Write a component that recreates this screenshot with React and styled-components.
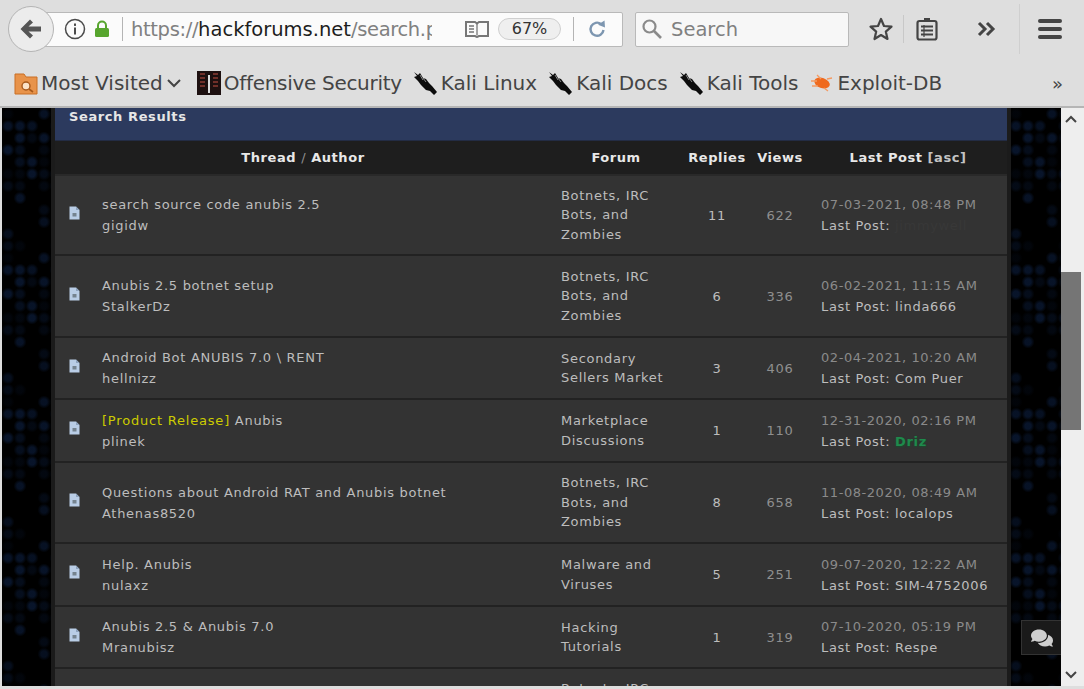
import React from 'react';
import styled, { createGlobalStyle } from 'styled-components';
import { FaComments } from 'react-icons/fa';

const GlobalStyle = createGlobalStyle`
  html, body {
    margin: 0;
    padding: 0;
    height: 689px;
    overflow: hidden;
    background: #dedede;
    font-family: "DejaVu Sans", sans-serif;
  }
`;

// dotted page wallpaper, a few dark blue squares scattered on a 144px tile
const buildDots = () => {
  const layers = [];
  let seed = 41;
  for (let row = 0; row < 12; row++) {
    for (let col = 0; col < 12; col++) {
      seed = (seed * 1103 + 12345) % 65536;
      const roll = seed >> 8;
      if (roll % 10 < 4) continue;
      const alpha = (0.15 + (roll % 16) * 0.035).toFixed(2);
      const x = col * 12 + 6;
      const y = row * 12 + 6;
      layers.push(`radial-gradient(circle at ${x}px ${y}px, rgba(12,30,62,${alpha}) 0, rgba(12,30,62,${alpha}) 3px, transparent 6.5px)`);
    }
  }
  return layers.join(',');
};

const threads = [
  { title: 'search source code anubis 2.5', author: 'gigidw', forum: ['Botnets, IRC', 'Bots, and', 'Zombies'], replies: 11, views: 622, date: '07-03-2021, 08:48 PM', last: 'jimmywell', lastKind: 'hidden', height: 78 },
  { title: 'Anubis 2.5 botnet setup', author: 'StalkerDz', forum: ['Botnets, IRC', 'Bots, and', 'Zombies'], replies: 6, views: 336, date: '06-02-2021, 11:15 AM', last: 'linda666', height: 80 },
  { title: 'Android Bot ANUBIS 7.0 \\ RENT', author: 'hellnizz', forum: ['Secondary', 'Sellers Market'], replies: 3, views: 406, date: '02-04-2021, 10:20 AM', last: 'Com Puer', height: 60 },
  { prefix: '[Product Release]', title: ' Anubis', author: 'plinek', forum: ['Marketplace', 'Discussions'], replies: 1, views: 110, date: '12-31-2020, 02:16 PM', last: 'Driz', lastKind: 'green', height: 61 },
  { title: 'Questions about Android RAT and Anubis botnet', author: 'Athenas8520', forum: ['Botnets, IRC', 'Bots, and', 'Zombies'], replies: 8, views: 658, date: '11-08-2020, 08:49 AM', last: 'localops', height: 79 },
  { title: 'Help. Anubis', author: 'nulaxz', forum: ['Malware and', 'Viruses'], replies: 5, views: 251, date: '09-07-2020, 12:22 AM', last: 'SIM-4752006', height: 61 },
  { title: 'Anubis 2.5 & Anubis 7.0', author: 'Mranubisz', forum: ['Hacking', 'Tutorials'], replies: 1, views: 319, date: '07-10-2020, 05:19 PM', last: 'Respe', height: 60 },
  { title: 'Anubis', author: 'anubis', forum: ['Botnets, IRC', 'Bots, and', 'Zombies'], replies: 2, views: 300, date: '06-12-2020, 01:10 PM', last: 'anubis', height: 78 },
];

const Kali = () => (
  <svg width="26" height="26" viewBox="0 0 26 26">
    <path d="M2 2 L6 5 L8 3 L11 8 L14 9 L17 13 L20 16 L25 22 L22 25 L18 21 L14 20 L9 15 L6 11 L2 7 L5 6 Z" fill="#0c0c0c" />
    <path d="M8 5 L11 10 M11 8 L14 12" stroke="#8a8a8a" strokeWidth="1" />
  </svg>
);

const FileIcon = () => (
  <DocIcon viewBox="0 0 11 14">
    <path d="M0.5 0.5 H7 L10.5 4 V13.5 H0.5 Z" fill="#b9cde6" />
    <path d="M7 0.5 V4 H10.5" fill="#8ea3bd" />
    <rect x="3.5" y="7" width="4" height="3.5" fill="#75838f" />
  </DocIcon>
);

const App = () => {
  return (
    <Window>
      <GlobalStyle />
      <NavBar>
        <BackButton>
          <svg width="24" height="22" viewBox="0 0 24 22">
            <path d="M11 1.5 L1.5 11 L11 20.5 L14 17.5 L9.5 13.5 H22 V8.5 H9.5 L14 4.5 Z" fill="#555" />
          </svg>
        </BackButton>
        <UrlBar>
          <svg width="22" height="22" viewBox="0 0 22 22">
            <circle cx="11" cy="11" r="9.5" fill="none" stroke="#4a4a4a" strokeWidth="1.5" />
            <rect x="10" y="9.5" width="2" height="7" fill="#4a4a4a" />
            <rect x="10" y="5.5" width="2" height="2.4" fill="#4a4a4a" />
          </svg>
          <LockIcon width="16" height="18" viewBox="0 0 16 18">
            <path d="M4 8 V5.5 a4 4 0 0 1 8 0 V8" fill="none" stroke="#57a52e" strokeWidth="2" />
            <rect x="1" y="8" width="14" height="9" rx="1.5" fill="#57a52e" />
          </LockIcon>
          <UrlDivider />
          <UrlText>https://<strong>hackforums.net</strong>/search.php</UrlText>
          <svg width="24" height="18" viewBox="0 0 24 18">
            <path d="M1 2 H10 L12 3.5 L14 2 H23 V16 H14 L12 17 L10 16 H1 Z" fill="none" stroke="#777" strokeWidth="2" />
            <path d="M4 6 H9 M4 9 H9 M4 12 H9 M12 4 V15" stroke="#777" strokeWidth="1.3" />
          </svg>
          <ZoomPill>67%</ZoomPill>
          <UrlDivider />
          <ReloadIcon width="20" height="20" viewBox="0 0 20 20">
            <path d="M16.5 11 A6.5 6.5 0 1 1 14 5" fill="none" stroke="#7d96b0" strokeWidth="2.4" />
            <path d="M11 5.8 L18 8.5 L17.5 1.5 Z" fill="#7d96b0" />
          </ReloadIcon>
        </UrlBar>
        <SearchBox>
          <svg width="22" height="22" viewBox="0 0 22 22">
            <circle cx="8.5" cy="8.5" r="6" fill="none" stroke="#8a8a8a" strokeWidth="2.2" />
            <path d="M13 13 L20 20" stroke="#8a8a8a" strokeWidth="2.6" />
          </svg>
          Search
        </SearchBox>
        <ToolIcons>
          <svg width="26" height="26" viewBox="0 0 26 26">
            <path d="M13 3 L16 10 L23.5 10.7 L17.8 15.6 L19.5 23 L13 19 L6.5 23 L8.2 15.6 L2.5 10.7 L10 10 Z" fill="none" stroke="#444" strokeWidth="2.2" strokeLinejoin="round" />
          </svg>
          <ToolDivider />
          <svg width="22" height="24" viewBox="0 0 22 24">
            <rect x="1.5" y="4" width="19" height="18.5" rx="2" fill="none" stroke="#444" strokeWidth="2.2" />
            <rect x="8" y="1" width="6" height="4" fill="#444" />
            <path d="M5 9.5 H17 M5 13.5 H17 M5 17.5 H17" stroke="#444" strokeWidth="2" />
            <path d="M8 8 V20" stroke="#444" strokeWidth="1.2" />
          </svg>
          <ChevronsLabel>
            <svg width="20" height="16" viewBox="0 0 20 16">
              <path d="M2 2 L8 8 L2 14 M10 2 L16 8 L10 14" fill="none" stroke="#444" strokeWidth="3" />
            </svg>
          </ChevronsLabel>
          <MenuDivider />
          <Hamburger>
            <span /><span /><span />
          </Hamburger>
        </ToolIcons>
      </NavBar>

      <Bookmarks>
        <Bookmark>
          <svg width="24" height="24" viewBox="0 0 24 24">
            <path d="M1 3 H10 L12 6 H23 V23 H1 Z" fill="#e8934a" stroke="#c96f25" />
            <circle cx="12" cy="15" r="4" fill="#fbe3c8" stroke="#a85a1b" strokeWidth="1.4" />
            <path d="M15 18 L19 21" stroke="#a85a1b" strokeWidth="1.6" />
          </svg>
          Most Visited
          <MenuCaret width="16" height="10" viewBox="0 0 16 10">
            <path d="M2 2 L8 8 L14 2" fill="none" stroke="#444" strokeWidth="2" />
          </MenuCaret>
        </Bookmark>
        <Bookmark $spacing="-0.3px">
          <svg width="24" height="24" viewBox="0 0 24 24">
            <rect width="24" height="24" fill="#1d1010" />
            <path d="M3 3 H8 M3 7 H8 M3 11 H8 M3 15 H8 M16 3 H21 M16 7 H21 M16 11 H21 M16 15 H21" stroke="#8c3a32" strokeWidth="1.6" />
            <path d="M12 4 V22" stroke="#ddd" strokeWidth="2" />
          </svg>
          Offensive Security
        </Bookmark>
        <Bookmark><Kali />Kali Linux</Bookmark>
        <Bookmark><Kali />Kali Docs</Bookmark>
        <Bookmark><Kali />Kali Tools</Bookmark>
        <Bookmark>
          <svg width="26" height="20" viewBox="0 0 24 20">
            <ellipse cx="13" cy="10" rx="8" ry="5" fill="#ef6a1e" transform="rotate(20 13 10)" />
            <path d="M2 8 H8 M3 13 H9 M8 2 L12 6 M15 15 L19 18 M18 6 L23 5" stroke="#f49a62" strokeWidth="1.3" />
          </svg>
          Exploit-DB
        </Bookmark>
        <MoreBookmarks>»</MoreBookmarks>
      </Bookmarks>

      <Viewport>
        <Page>
          <Wrapper>
            <Results>
              <colgroup>
                <col width="36" />
                <col width="460" />
                <col width="130" />
                <col width="72" />
                <col width="54" />
                <col width="200" />
              </colgroup>
              <thead>
                <tr>
                  <TitleCell colSpan={6}>Search Results</TitleCell>
                </tr>
                <tr>
                  <HeadCell colSpan={2}>Thread <Slash>/</Slash> Author</HeadCell>
                  <HeadCell>Forum</HeadCell>
                  <HeadCell>Replies</HeadCell>
                  <HeadCell>Views</HeadCell>
                  <LastHead>Last Post <SortMark>[asc]</SortMark></LastHead>
                </tr>
              </thead>
              <tbody>
                {threads.map((t) => (
                  <tr key={t.date}>
                    <IconCell $height={t.height}><FileIcon /></IconCell>
                    <ThreadCell>
                      <Line>{t.prefix && <Prefix>{t.prefix}</Prefix>}{t.title}</Line>
                      <Line>{t.author}</Line>
                    </ThreadCell>
                    <Cell>
                      {t.forum.map((l) => <Line key={l} $tight>{l}</Line>)}
                    </Cell>
                    <NumberCell>{t.replies}</NumberCell>
                    <NumberCell $dim>{t.views}</NumberCell>
                    <LastCell>
                      <DateLine>{t.date}</DateLine>
                      <Line>Last Post: <LastUser $kind={t.lastKind}>{t.last}</LastUser></Line>
                    </LastCell>
                  </tr>
                ))}
              </tbody>
            </Results>
          </Wrapper>
          <ChatTab><FaComments /></ChatTab>
        </Page>
        <Scrollbar>
          <ScrollArrow viewBox="0 0 14 10"><path d="M2 8 L7 3 L12 8" fill="none" stroke="#444" strokeWidth="2" /></ScrollArrow>
          <Track><Thumb /></Track>
          <ScrollArrow viewBox="0 0 14 10"><path d="M2 2 L7 7 L12 2" fill="none" stroke="#444" strokeWidth="2" /></ScrollArrow>
        </Scrollbar>
      </Viewport>
    </Window>
  );
};

export default App;

const Window = styled.div`
  width: 1084px;
  height: 689px;
  display: flex;
  flex-direction: column;
  overflow: hidden;
  background: #dedede;
`;

const NavBar = styled.div`
  display: flex;
  align-items: center;
  height: 60px;
  padding: 0 0 2px 8px;
  box-sizing: border-box;
  flex-shrink: 0;
`;

const BackButton = styled.div`
  width: 46px;
  height: 46px;
  box-sizing: border-box;
  border-radius: 50%;
  border: 1px solid #b4b4b4;
  background: #ececec;
  display: flex;
  align-items: center;
  justify-content: center;
  z-index: 1;
  flex-shrink: 0;
`;

const UrlBar = styled.div`
  display: flex;
  align-items: center;
  gap: 8px;
  width: 582px;
  height: 35px;
  margin-left: -13px;
  padding: 0 13px 0 22px;
  box-sizing: border-box;
  background: #fbfbfb;
  border: 1px solid #b9b9b9;
  border-radius: 2px;
  flex-shrink: 0;
`;

const LockIcon = styled.svg`
  margin-right: 4px;
  flex-shrink: 0;
`;

const UrlDivider = styled.span`
  width: 1px;
  height: 24px;
  background: #b4b4b4;
  flex-shrink: 0;
`;

const UrlText = styled.div`
  width: 301px;
  margin-right: 25px;
  overflow: hidden;
  white-space: nowrap;
  font-size: 19.5px;
  letter-spacing: -0.35px;
  color: #808080;
  flex-shrink: 0;

  strong {
    font-weight: 400;
    letter-spacing: 0;
    color: #1d1d1d;
  }
`;

const ZoomPill = styled.div`
  width: 63px;
  height: 22px;
  box-sizing: border-box;
  border: 1px solid #cfcfcf;
  border-radius: 11px;
  background: #efefef;
  color: #333;
  font-size: 16px;
  line-height: 20px;
  text-align: center;
  margin: 0 4px 0 1px;
  flex-shrink: 0;
`;

const ReloadIcon = styled.svg`
  margin-left: 5px;
  flex-shrink: 0;
`;

const SearchBox = styled.div`
  display: flex;
  align-items: center;
  gap: 8px;
  width: 214px;
  height: 35px;
  margin-left: 12px;
  padding-left: 5px;
  box-sizing: border-box;
  background: #f7f7f7;
  border: 1px solid #b9b9b9;
  border-radius: 2px;
  color: #808080;
  font-size: 19.5px;
  flex-shrink: 0;
`;

const ToolIcons = styled.div`
  display: flex;
  align-items: center;
  margin-left: 19px;
`;

const ToolDivider = styled.span`
  width: 1px;
  height: 28px;
  margin: 0 12px 0 9px;
  background: #c8c8c8;
`;

const ChevronsLabel = styled.div`
  display: flex;
  margin-left: 39px;
`;

const MenuDivider = styled.span`
  width: 1px;
  height: 50px;
  margin: 0 18px 0 22px;
  background: #cfcfcf;
`;

const Hamburger = styled.div`
  display: flex;
  flex-direction: column;
  gap: 4px;

  span {
    display: block;
    width: 24px;
    height: 4px;
    border-radius: 2px;
    background: #444;
  }
`;

const Bookmarks = styled.div`
  display: flex;
  align-items: center;
  gap: 10px;
  height: 48px;
  padding: 0 14px;
  box-sizing: border-box;
  border-bottom: 2px solid #b5b5b5;
  flex-shrink: 0;
`;

const Bookmark = styled.div`
  display: flex;
  align-items: center;
  gap: 3px;
  font-size: 20px;
  letter-spacing: ${(p) => p.$spacing || '0'};
  color: #444;
  white-space: nowrap;
`;

const MenuCaret = styled.svg`
  margin-right: 5px;
`;

const MoreBookmarks = styled.div`
  margin-left: auto;
  margin-right: 7px;
  font-size: 18px;
  color: #444;
`;

const Viewport = styled.div`
  display: flex;
  height: 578px;
  margin-left: 2px;
  flex-shrink: 0;
`;

const Page = styled.div`
  position: relative;
  flex: 1;
  overflow: hidden;
  background-color: #000;
  background-image: ${buildDots()};
  background-size: 144px 144px;
`;

const Wrapper = styled.div`
  width: 952px;
  margin-left: 49px;
  padding: 0 4px;
  background: #1b1b1b;
`;

const Results = styled.table`
  width: 952px;
  table-layout: fixed;
  border-collapse: separate;
  border-spacing: 0;
  font-size: 13px;
  letter-spacing: 0.7px;
  color: #bdbdbd;
`;

const TitleCell = styled.th`
  height: 33px;
  padding: 0 0 14px 14px;
  box-sizing: border-box;
  background: #2c3a5e;
  border-bottom: 1px solid #232c44;
  color: #e6e6e6;
  font-size: 13px;
  font-weight: 700;
  letter-spacing: 0.6px;
  text-align: left;
  vertical-align: top;
  line-height: 18px;
`;

const HeadCell = styled.th`
  height: 35px;
  padding: 0;
  background: #1e1e1e;
  border-bottom: 2px solid #292929;
  color: #e8e8e8;
  font-size: 13px;
  font-weight: 700;
  letter-spacing: 0.55px;
  text-align: center;
  box-sizing: border-box;
`;

const LastHead = styled(HeadCell)`
  padding-left: 2px;
`;

const Slash = styled.span`
  color: #8f8f8f;
  font-weight: 400;
`;

const SortMark = styled.span`
  color: #c4c4c4;
`;

const Cell = styled.td`
  padding: 0 10px;
  background: #333;
  border-bottom: 2px solid #222;
  vertical-align: middle;
`;

const IconCell = styled(Cell)`
  height: ${(p) => p.$height}px;
  padding: 0;
  text-align: center;
  box-sizing: content-box;
`;

const ThreadCell = styled(Cell)`
  padding-left: 11px;
`;

const LastCell = styled(Cell)`
  padding-left: 14px;
  letter-spacing: 0.65px;
`;

const NumberCell = styled(Cell)`
  padding: 0;
  text-align: center;
  color: ${(p) => (p.$dim ? '#8f8f8f' : '#bdbdbd')};
`;

const Line = styled.div`
  line-height: ${(p) => (p.$tight ? '19.5px' : '21px')};
  white-space: nowrap;
`;

const DateLine = styled(Line)`
  color: #8a8a8a;
  letter-spacing: 0.55px;
`;

const Prefix = styled.span`
  color: #cccc00;
  letter-spacing: 0.8px;
`;

const LastUser = styled.span`
  color: ${(p) => (p.$kind === 'green' ? '#1f8a4c' : p.$kind === 'hidden' ? '#383838' : '#bdbdbd')};
  font-weight: ${(p) => (p.$kind === 'green' ? 700 : 400)};
  text-shadow: ${(p) => (p.$kind === 'green' ? '0 1px 2px #14502c' : 'none')};
`;

const DocIcon = styled.svg`
  display: block;
  width: 11px;
  height: 14px;
  margin: 0 auto 5px;
  transform: translateX(1px);
`;

const ChatTab = styled.div`
  position: absolute;
  top: 512px;
  right: 0;
  width: 40px;
  height: 35px;
  box-sizing: border-box;
  border: 1px solid #333;
  border-right: none;
  background: #1a1a1a;
  color: #cfcfcf;
  font-size: 22px;
  display: flex;
  align-items: center;
  justify-content: center;
`;

const Scrollbar = styled.div`
  width: 23px;
  box-sizing: border-box;
  padding-right: 3px;
  display: flex;
  flex-direction: column;
  align-items: center;
  background: #eeeeee;
  flex-shrink: 0;
`;

const ScrollArrow = styled.svg`
  width: 14px;
  height: 10px;
  margin: 6px 0;
  flex-shrink: 0;
`;

const Track = styled.div`
  flex: 1;
  width: 100%;
  padding-top: 142px;
`;

const Thumb = styled.div`
  width: 100%;
  height: 158px;
  background: #757575;
`;
